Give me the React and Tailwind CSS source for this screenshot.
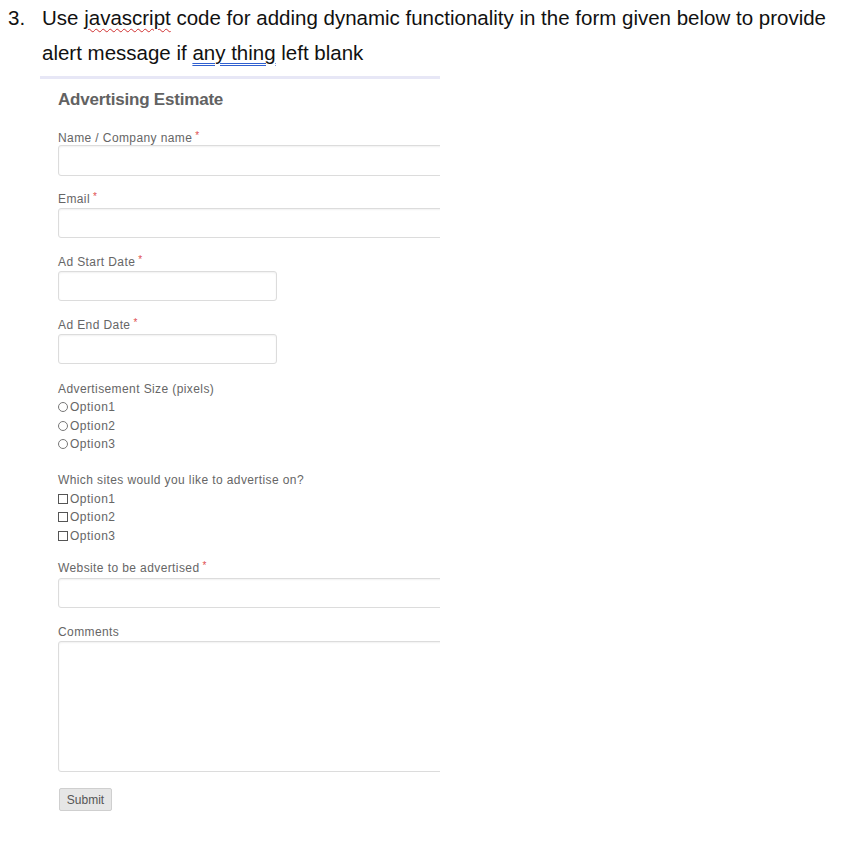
import React from 'react';

const font = { fontFamily: '"Liberation Sans", Arial, sans-serif' };

function Label({ children, required, className = '' }) {
  return (
    <div className={`h-[14px] text-[12px] leading-[14px] tracking-[0.4px] text-[#666] ${className}`}>
      {children}
      {required && <span className="ml-[3px] align-top text-[10px] leading-[10px] text-[#e05050]">*</span>}
    </div>
  );
}

function Field({ className = '' }) {
  return (
    <div
      className={`rounded-[3px] border border-[#dcdcdc] bg-white shadow-[inset_0_1px_2px_rgba(0,0,0,0.06)] ${className}`}
    />
  );
}

function Choice({ kind, text }) {
  return (
    <div className="flex h-[18.5px] items-center gap-[2px] text-[12px] tracking-[0.5px] text-[#666]">
      {kind === 'radio' ? (
        <span className="h-[10px] w-[10px] rounded-full border border-[#777]" />
      ) : (
        <span className="h-[10px] w-[10px] border border-[#555]" />
      )}
      <span>{text}</span>
    </div>
  );
}

export default function App() {
  return (
    <div className="min-h-[842px] w-[849px] bg-white" style={font}>
      <div className="flex pl-[8px] text-[20.5px] leading-[35px] text-[#111]">
        <span className="w-[34px]">3.</span>
        <div className="w-[795px]">
          Use{' '}
          <span className="underline decoration-wavy decoration-[#d03030] decoration-1 underline-offset-[3px]">
            javascript
          </span>{' '}
          code for adding dynamic functionality in the form given below to provide alert message if{' '}
          <span className="underline decoration-double decoration-[#2f5fd0] decoration-1 underline-offset-[3px]">
            any thing
          </span>{' '}
          left blank
        </div>
      </div>

      <div className="ml-[40px] mt-[6px] w-[400px] overflow-hidden border-t-[3px] border-[#e7e7f6] pb-[30px] pl-[18px] pt-[10px]">
        <div className="h-[22px] text-[17px] font-semibold leading-[22px] tracking-[-0.2px] text-[#626262]">
          Advertising Estimate
        </div>

        <Label required className="mt-[20px]">Name / Company name</Label>
        <Field className="h-[31px] w-[420px]" />

        <Label required className="mt-[16px]">Email</Label>
        <Field className="mt-[2px] h-[30px] w-[420px]" />

        <Label required className="mt-[17px]">Ad Start Date</Label>
        <Field className="mt-[2px] h-[30px] w-[219px]" />

        <Label required className="mt-[17px]">Ad End Date</Label>
        <Field className="mt-[2px] h-[30px] w-[219px]" />

        <Label className="mt-[18px]">Advertisement Size (pixels)</Label>
        <div className="mt-[2px]">
          <Choice kind="radio" text="Option1" />
          <Choice kind="radio" text="Option2" />
          <Choice kind="radio" text="Option3" />
        </div>

        <Label className="mt-[19px]">Which sites would you like to advertise on?</Label>
        <div className="mt-[3px]">
          <Choice kind="check" text="Option1" />
          <Choice kind="check" text="Option2" />
          <Choice kind="check" text="Option3" />
        </div>

        <Label required className="mt-[16px]">Website to be advertised</Label>
        <Field className="mt-[3px] h-[30px] w-[420px]" />

        <Label className="mt-[17px]">Comments</Label>
        <Field className="mt-[2px] h-[131px] w-[420px]" />

        <button className="mt-[16px] ml-[1px] h-[23px] w-[53px] rounded-[2px] border border-[#cfcfcf] bg-[#e6e6e6] text-[12px] text-[#555]">
          Submit
        </button>
      </div>
    </div>
  );
}
